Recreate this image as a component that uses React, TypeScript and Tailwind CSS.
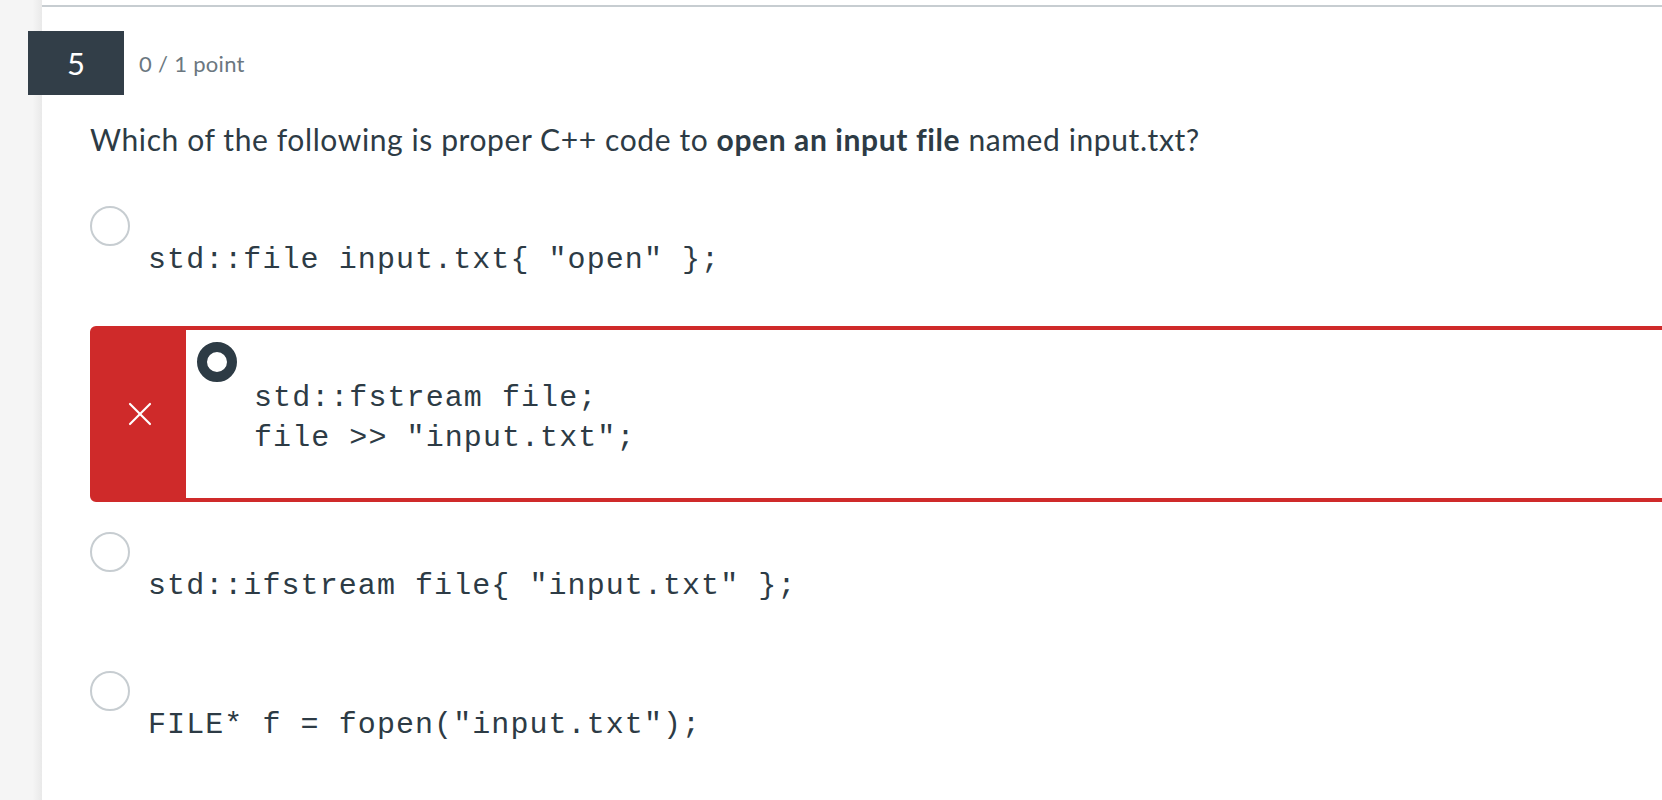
import { X } from "lucide-react";

const lato = { fontFamily: "Lato, 'Noto Sans', sans-serif" };

function Radio({ selected = false }: { selected?: boolean }) {
  if (selected) {
    return (
      <div className="w-[40px] h-[40px] rounded-full border-[10px] border-[#2d3b45] bg-white shrink-0" />
    );
  }
  return <div className="w-[40px] h-[40px] rounded-full border-2 border-[#c7cdd1] bg-white shrink-0" />;
}

function Code({ lines }: { lines: string[] }) {
  return (
    <div className="font-['Liberation_Mono',monospace] text-[30px] leading-[40px] tracking-[1.07px] text-[#2d3b45] whitespace-pre">
      {lines.map((l) => (
        <div key={l}>{l}</div>
      ))}
    </div>
  );
}

function Option({ code }: { code: string }) {
  return (
    <div className="flex flex-col">
      <Radio />
      <div className="ml-[58px] -mt-[6px]">
        <Code lines={[code]} />
      </div>
    </div>
  );
}

export default function App() {
  return (
    <div className="flex h-[800px] w-full overflow-hidden bg-white" style={lato}>
      {/* left gutter */}
      <div className="w-[42px] shrink-0 bg-[linear-gradient(to_right,#f5f5f5_78%,#e9e9e9)]" />

      <main className="flex-1 min-w-0 pt-[5px]">
        <div className="border-t-2 border-[#c7cdd1]">
          {/* header */}
          <div className="flex items-center mt-[24px] -ml-[14px]">
            <div className="w-[96px] h-[64px] bg-[#323e48] text-white text-[31px] flex items-center justify-center">
              5
            </div>
            <span className="ml-[15px] text-[22px] tracking-[0.3px] text-[#6b7780]">0 / 1 point</span>
          </div>

          {/* question */}
          <p className="ml-[48px] mt-[26px] text-[30px] tracking-[0.6px] leading-[36px] text-[#2d3b45]">
            Which of the following is proper C++ code to <strong className="font-bold">open an input file</strong> named input.txt?
          </p>

          <div className="ml-[48px] mt-[49px] flex flex-col">
            <Option code={'std::file input.txt{ "open" };'} />

            {/* wrong answer */}
            <div className="mt-[46px] -mr-[20px] flex h-[176px] rounded-md border-4 border-[#cf2a2a] bg-[#cf2a2a] overflow-hidden">
              <div className="w-[92px] shrink-0 flex items-center justify-center">
                <X className="text-white w-[40px] h-[40px]" strokeWidth={1.3} />
              </div>
              <div className="flex-1 bg-white pl-[11px] pt-[12px]">
                <Radio selected />
                <div className="ml-[57px] -mt-[4px]">
                  <Code lines={["std::fstream file;", 'file >> "input.txt";']} />
                </div>
              </div>
            </div>

            <div className="mt-[30px]">
              <Option code={'std::ifstream file{ "input.txt" };'} />
            </div>
            <div className="mt-[65px]">
              <Option code={'FILE* f = fopen("input.txt");'} />
            </div>
          </div>
        </div>
      </main>
    </div>
  );
}
